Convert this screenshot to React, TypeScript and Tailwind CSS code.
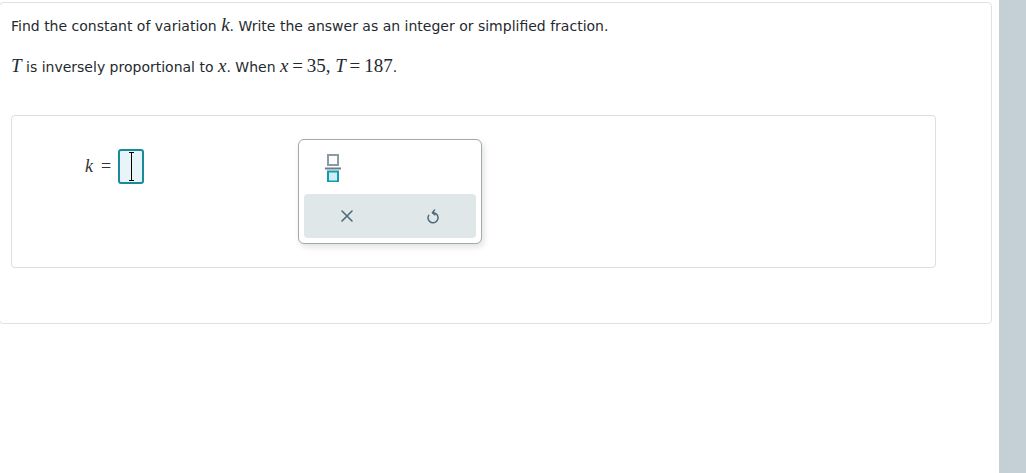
import React from "react";

const serif = { fontFamily: '"Liberation Serif", "Times New Roman", serif' };

export default function App() {
  return (
    <div className="flex h-[473px] w-[1026px] bg-white overflow-hidden" style={{ fontFamily: '"DejaVu Sans", Verdana, sans-serif' }}>
      <div className="flex-1 pt-[2px] pr-[7px] pl-0">
        <div className="ml-[-1px] h-[322px] rounded-[4px] border border-[#dde3e5] bg-white pl-[11px] pr-[55px]">
          <p className="mt-[12px] text-[14px] leading-[20px] text-[#1f2a30]">
            Find the constant of variation <span className="italic text-[19px]" style={serif}>k</span>. Write the answer as an integer or simplified fraction.
          </p>
          <p className="mt-[20px] text-[14px] leading-[20px] text-[#1f2a30]">
            <span className="italic text-[19px]" style={serif}>T</span> is inversely proportional to <span className="italic text-[19px]" style={serif}>x</span>. When{" "}
            <span className="text-[19px]" style={serif}><i>x</i>&thinsp;=&thinsp;35, <i>T</i>&thinsp;=&thinsp;187</span>.
          </p>
          <div className="relative mt-[38px] h-[153px] rounded-[4px] border border-[#d9dfe2] bg-white">
            <div className="absolute left-[73px] top-[33px] flex items-center">
              <span className="italic text-[18px] text-[#333]" style={serif}>k</span>
              <span className="ml-[8px] text-[18px] text-[#333]" style={serif}>=</span>
              <div className="relative ml-[7px] h-[35px] w-[26px] rounded-[3px] border-2 border-[#1a8a9b] bg-[#e7f5f8]">
                <div className="absolute left-[11px] top-[1px] h-[29px] w-px bg-black" />
                <div className="absolute left-[9px] top-[1px] h-px w-[5px] bg-black" />
                <div className="absolute left-[9px] top-[29px] h-px w-[5px] bg-black" />
              </div>
            </div>
            <div className="absolute left-[286px] top-[23px] h-[105px] w-[184px] rounded-[6px] border border-[#9eaab0] bg-white p-[5px] shadow-[2px_3px_6px_rgba(0,0,0,0.12)]">
              <div className="h-[49px] pl-[21px] pt-[9px]">
                <svg width="16" height="28" viewBox="0 0 16 28">
                  <rect x="3" y="1" width="10" height="10" fill="#fff" stroke="#8a9ba2" strokeWidth="2" />
                  <rect x="0" y="13.5" width="16" height="2" fill="#6c7f87" />
                  <rect x="3" y="17.5" width="10" height="10" fill="#cdeef3" stroke="#1599b0" strokeWidth="2" />
                </svg>
              </div>
              <div className="flex h-[44px] items-center rounded-[4px] bg-[#dfe7e9]">
                <div className="flex w-[86px] justify-center">
                  <svg width="14" height="14" viewBox="0 0 14 14">
                    <path d="M2 2 L12 12 M12 2 L2 12" stroke="#4c6a77" strokeWidth="1.6" strokeLinecap="round" />
                  </svg>
                </div>
                <div className="flex w-[86px] justify-center">
                  <svg width="14" height="16" viewBox="0 0 14 16">
                    <path d="M7 4.8 A5 5 0 1 1 2.7 7.3" fill="none" stroke="#4c6a77" strokeWidth="1.5" strokeLinecap="round" />
                    <path d="M8.6 2 L6.4 4.7 L8.8 6.8" fill="none" stroke="#4c6a77" strokeWidth="1.5" strokeLinecap="round" strokeLinejoin="round" />
                  </svg>
                </div>
              </div>
            </div>
          </div>
        </div>
      </div>
      <div className="h-full w-[27px] bg-[#c4d0d5]" />
    </div>
  );
}
